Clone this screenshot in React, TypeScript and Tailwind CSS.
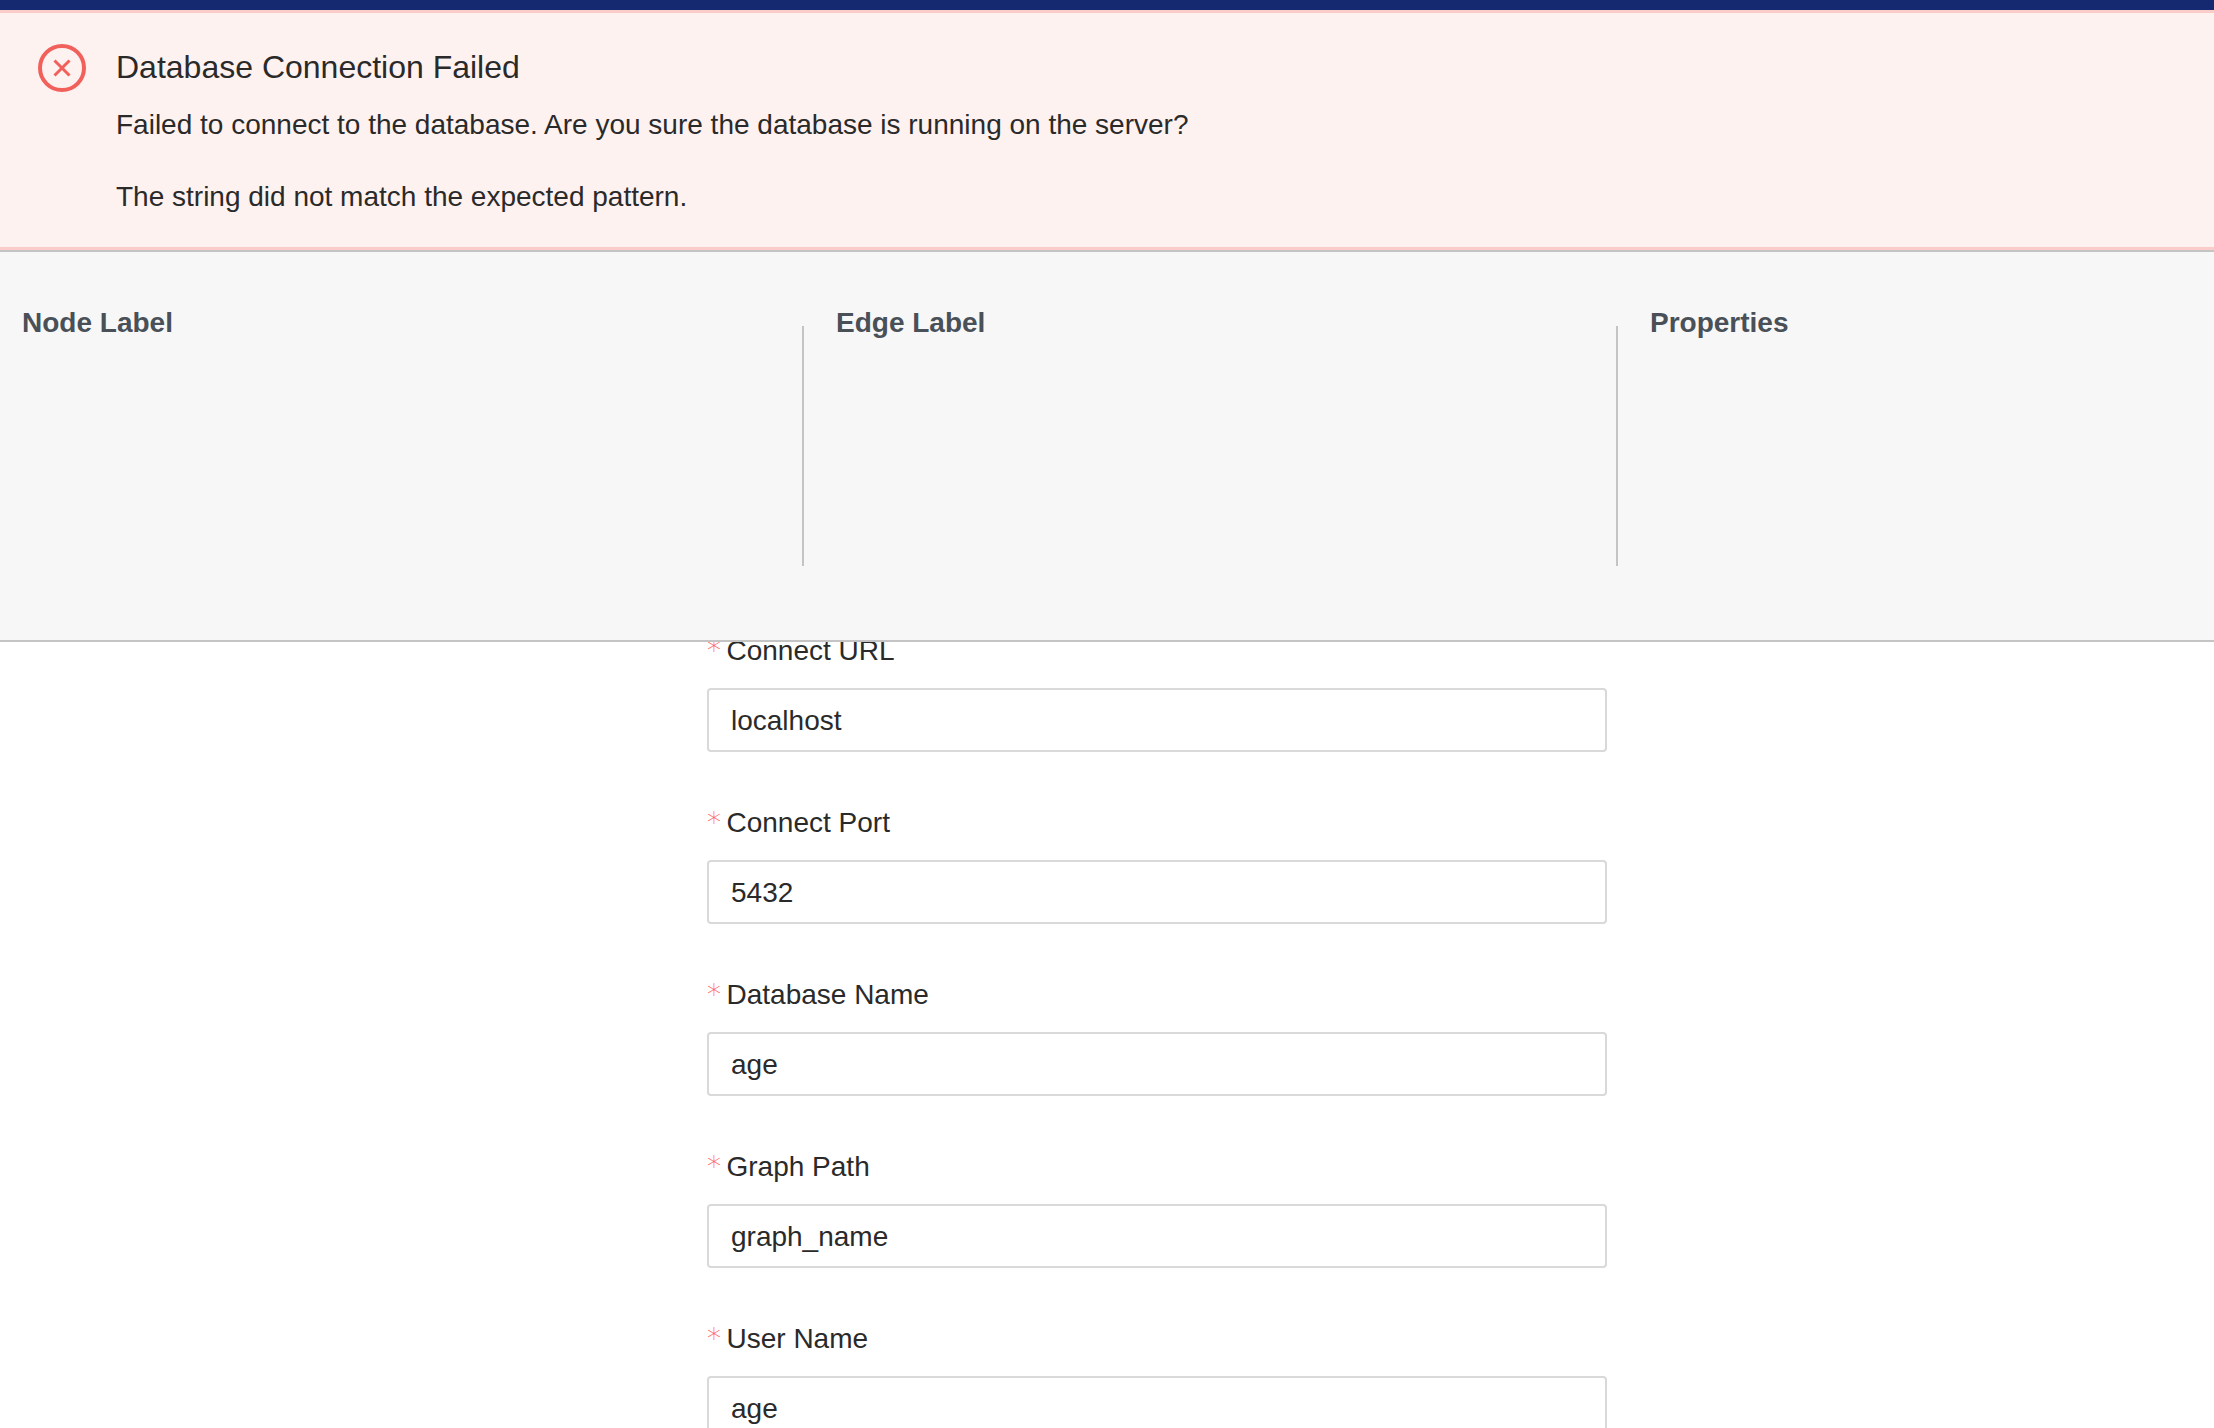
const fields = [
  ["Connect URL", "localhost"],
  ["Connect Port", "5432"],
  ["Database Name", "age"],
  ["Graph Path", "graph_name"],
  ["User Name", "age"],
];

function ErrorIcon() {
  return (
    <svg className="w-[48px] h-[48px] shrink-0" viewBox="0 0 48 48" fill="none" stroke="#f2605c">
      <circle cx="24" cy="24" r="22" strokeWidth="4" />
      <path d="M16.5 16.5 L31.5 31.5 M31.5 16.5 L16.5 31.5" strokeWidth="3" />
    </svg>
  );
}

function Divider() {
  return <div className="w-[2px] h-[240px] mt-[24px] bg-[#c4c4c4] shrink-0" />;
}

export default function App() {
  return (
    <div className="h-[1428px] overflow-hidden bg-white text-[#2a2a2a] font-['Liberation_Sans',Arial,sans-serif]">
      <div className="relative z-10">
        <div className="h-[10px] bg-[#14296f]" />
        <div className="flex gap-[30px] h-[240px] pt-[31px] pl-[38px] bg-[#fef2f0] border-y-[3px] border-[#fbcdc8]">
          <ErrorIcon />
          <div>
            <div className="text-[32px] leading-[46px]">Database Connection Failed</div>
            <div className="mt-[13px] text-[28px] leading-[44px]">
              Failed to connect to the database. Are you sure the database is running on the server?
            </div>
            <div className="mt-[28px] text-[28px] leading-[44px]">The string did not match the expected pattern.</div>
          </div>
        </div>
        <div className="flex h-[392px] pt-[50px] pl-[22px] bg-[#f7f7f7] border-t-2 border-b-2 border-[#c4c4c4]">
          <h3 className="w-[780px] shrink-0 text-[28px] leading-[42px] font-bold text-[#495057]">Node Label</h3>
          <Divider />
          <h3 className="w-[780px] shrink-0 ml-[32px] text-[28px] leading-[42px] font-bold text-[#495057]">Edge Label</h3>
          <Divider />
          <h3 className="flex-1 ml-[32px] text-[28px] leading-[42px] font-bold text-[#495057]">Properties</h3>
        </div>
      </div>
      <form className="w-[900px] ml-[707px] -mt-[14px]">
        {fields.map(([label, value]) => (
          <div key={label} className="mb-[48px]">
            <div className="flex pt-[1px] pb-[15px] text-[28px] leading-[44px]">
              <span className="w-[19.5px] text-[#ff5a5a] text-[28px] leading-[44px] font-extralight font-['DejaVu_Sans',sans-serif]">*</span>
              <label>{label}</label>
            </div>
            <div className="flex items-center h-[64px] pt-[2px] px-[22px] border-2 border-[#d9d9d9] rounded-[4px] text-[28px]">
              {value}
            </div>
          </div>
        ))}
      </form>
    </div>
  );
}
